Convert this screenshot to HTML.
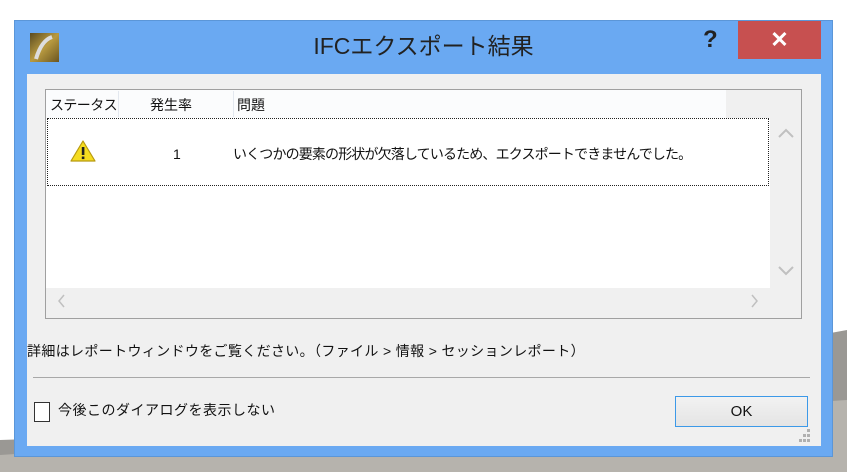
<!DOCTYPE html>
<html><head><meta charset="utf-8"><style>
*{margin:0;padding:0;box-sizing:border-box}
body{width:847px;height:472px;overflow:hidden;background:#fff;position:relative;font-family:"Liberation Sans","Noto Sans CJK JP",sans-serif;color:#111}
.a{position:absolute}
.t{font-size:14px;white-space:nowrap;line-height:16px}
</style></head><body>
<svg class="a" style="left:0;top:0" width="847" height="472"><polygon points="0,440 300,430 847,330 847,472 0,472" fill="#9a9894"/><polygon points="0,455 847,400 847,472 0,472" fill="#b6b3ad"/></svg>
<div class="a" style="left:14px;top:20px;width:819px;height:437px;background:#6aa9f2;border:1px solid #5b96d8"></div>
<div class="a" style="left:30px;top:33px;width:29px;height:29px;background:linear-gradient(135deg,#5a4a20,#b89a40 50%,#6a5520)"></div>
<svg class="a" style="left:30px;top:33px" width="29" height="29"><path d="M6 26 C10 12 16 6 22 4" stroke="#ddd" stroke-width="4" fill="none"/></svg>
<div class="a" style="left:0;top:32px;width:847px;text-align:center;font-size:23px;color:#222;line-height:28px">IFCエクスポート結果</div>
<div class="a" style="left:703px;top:26px;font-size:24px;font-weight:bold;color:#222">?</div>
<div class="a" style="left:738px;top:21px;width:83px;height:38px;background:#c75050;color:#fff;font-size:22px;text-align:center;line-height:38px;font-weight:bold">✕</div>
<div class="a" style="left:27px;top:74px;width:794px;height:372px;background:#f0f0f0"></div>
<div class="a" style="left:45px;top:89px;width:757px;height:230px;border:1px solid #a0a0a0;background:#f0f0f0"></div>
<div class="a" style="left:46px;top:90px;width:680px;height:28px;background:#fbfcfd"></div>
<div class="a" style="left:118px;top:91px;width:1px;height:26px;background:#e3e8ef"></div>
<div class="a" style="left:233px;top:91px;width:1px;height:26px;background:#e3e8ef"></div>
<div class="a t" style="left:50px;top:97px;letter-spacing:-0.6px">ステータス</div>
<div class="a t" style="left:150px;top:97px">発生率</div>
<div class="a t" style="left:237px;top:97px">問題</div>
<div class="a" style="left:46px;top:118px;width:724px;height:170px;background:#fff"></div>
<div class="a" style="left:47px;top:118px;width:722px;height:68px;border:1px dotted #222"></div>
<svg class="a" style="left:70px;top:140px" width="26" height="22"><path d="M13 1 L25 21 L1 21 Z" fill="#f5dc20" stroke="#b89a10" stroke-width="1.2" stroke-linejoin="round"/><rect x="11.8" y="7" width="2.6" height="8" fill="#222"/><rect x="11.8" y="16.5" width="2.6" height="2.6" fill="#222"/></svg>
<div class="a t" style="left:173px;top:146px">1</div>
<div class="a t" style="left:233px;top:146px;letter-spacing:-0.85px">いくつかの要素の形状が欠落しているため、エクスポートできませんでした。</div>
<svg class="a" style="left:776px;top:125px" width="20" height="160"><path d="M3 12 L10 5 L17 12" stroke="#c0c0c0" stroke-width="2" fill="none"/><path d="M3 142 L10 149 L17 142" stroke="#c0c0c0" stroke-width="2" fill="none"/></svg>
<svg class="a" style="left:55px;top:292px" width="710" height="20"><path d="M9 3 L4 9 L9 15" stroke="#c0c0c0" stroke-width="1.5" fill="none"/><path d="M697 3 L702 9 L697 15" stroke="#c0c0c0" stroke-width="1.5" fill="none"/></svg>
<div class="a t" style="left:27px;top:343px;letter-spacing:0.35px">詳細はレポートウィンドウをご覧ください。（ファイル &gt; 情報 &gt; セッションレポート）</div>
<div class="a" style="left:33px;top:377px;width:777px;height:1px;background:#a8a8a8"></div>
<div class="a" style="left:34px;top:402px;width:16px;height:20px;border:1px solid #333;background:#fff"></div>
<div class="a t" style="left:58px;top:402px;letter-spacing:0.5px">今後このダイアログを表示しない</div>
<div class="a" style="left:675px;top:396px;width:133px;height:31px;border:1px solid #3c99e8;background:linear-gradient(#f2f2f2,#e4e4e4);text-align:center;line-height:29px;font-size:15px">OK</div>
<svg class="a" style="left:798px;top:428px" width="14" height="16" fill="#b0b0b0"><rect x="9" y="1" width="3" height="3"/><rect x="5" y="6" width="3" height="3"/><rect x="9" y="6" width="3" height="3"/><rect x="1" y="11" width="3" height="3"/><rect x="5" y="11" width="3" height="3"/><rect x="9" y="11" width="3" height="3"/></svg>
</body></html>
